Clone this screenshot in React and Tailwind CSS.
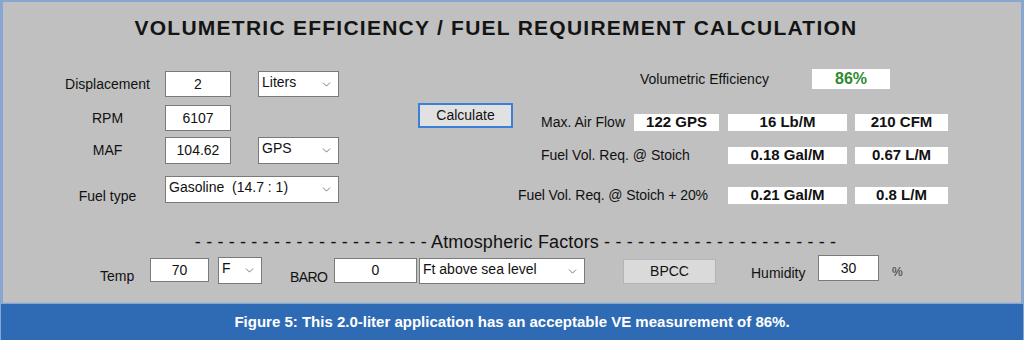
import React from 'react';
import { ChevronDown } from 'lucide-react';

const ui = { fontFamily: '"Liberation Sans", Arial, sans-serif' };

const TextBox = ({ value, className = '' }) => (
  <div className={`flex items-center justify-center bg-white border border-[#7a7a7a] text-[14px] text-[#111] ${className}`}>
    {value}
  </div>
);

const Combo = ({ value, className = '' }) => (
  <div className={`flex items-center justify-between bg-white border border-[#7a7a7a] pl-[3px] pr-[5px] text-[14px] text-[#111] ${className}`}>
    <span className="pb-[4px] whitespace-pre">{value}</span>
    <ChevronDown size={13} strokeWidth={1.4} className="text-[#555]" />
  </div>
);

const Result = ({ value, className = '' }) => (
  <div className={`flex items-center justify-center bg-white h-[17px] text-[15px] font-bold text-[#111] ${className}`}>
    {value}
  </div>
);

const Label = ({ children, className = '' }) => (
  <div className={`text-[14px] text-[#111] whitespace-nowrap ${className}`}>{children}</div>
);

const dashes = Array(21).fill('-').join(' ');

export default function App() {
  return (
    <div className="w-[1024px] h-[340px] bg-[#87a6d1] pt-[2px] flex flex-col" style={ui}>
      {/* form panel */}
      <div className="mx-[3px] h-[301px] bg-[#c0c0c0] border-b border-[#a9b8cc] flex flex-col">
        <h1 className="mt-[14px] h-[24px] leading-[24px] text-center pr-[32px] text-[21px] font-bold tracking-[1.25px] text-[#141414]">
          VOLUMETRIC EFFICIENCY / FUEL REQUIREMENT CALCULATION
        </h1>

        <div className="mt-[29px] h-[136px] flex items-start pl-[52px]">
          {/* inputs */}
          <div className="flex flex-col">
            <div className="mt-[2px] h-[26px] flex items-center">
              <Label className="w-[105px] text-center">Displacement</Label>
              <TextBox value="2" className="ml-[5px] w-[66px] h-full" />
              <Combo value="Liters" className="ml-[27px] w-[81px] h-full" />
            </div>
            <div className="mt-[8px] h-[26px] flex items-center">
              <Label className="w-[105px] text-center">RPM</Label>
              <TextBox value="6107" className="ml-[5px] w-[66px] h-full" />
            </div>
            <div className="mt-[6px] h-[27px] flex items-center">
              <Label className="w-[105px] text-center">MAF</Label>
              <TextBox value="104.62" className="ml-[5px] w-[66px] h-full" />
              <Combo value="GPS" className="ml-[27px] w-[81px] h-full" />
            </div>
            <div className="mt-[12px] h-[27px] flex items-center">
              <Label className="w-[105px] text-center pt-[13px]">Fuel type</Label>
              <Combo value="Gasoline  (14.7 : 1)" className="ml-[5px] w-[174px] h-full" />
            </div>
          </div>

          <button className="ml-[79px] mt-[34px] w-[95px] h-[25px] bg-[#e1e1e1] border-2 border-[#3b7fd8] text-[14px] text-[#111]">
            Calculate
          </button>

          {/* results */}
          <div className="ml-[5px] flex flex-col">
            <div className="h-[20px] flex items-center pl-[122px]">
              <Label className="w-[172px]">Volumetric Efficiency</Label>
              <div className="w-[78px] h-[20px] bg-white flex items-center justify-center text-[16px] font-bold text-[#2f8a30]">
                86%
              </div>
            </div>
            <div className="mt-[25px] h-[17px] flex items-center pl-[23px]">
              <Label className="w-[93px]">Max. Air Flow</Label>
              <Result value="122 GPS" className="w-[85px]" />
              <Result value="16 Lb/M" className="ml-[9px] w-[119px]" />
              <Result value="210 CFM" className="ml-[8px] w-[93px]" />
            </div>
            <div className="mt-[16px] h-[17px] flex items-center pl-[23px]">
              <Label className="w-[187px]">Fuel Vol. Req. @ Stoich</Label>
              <Result value="0.18 Gal/M" className="w-[119px]" />
              <Result value="0.67 L/M" className="ml-[8px] w-[93px]" />
            </div>
            <div className="mt-[23px] h-[17px] flex items-center">
              <Label className="w-[210px] tracking-[-0.1px]">Fuel Vol. Req. @ Stoich + 20%</Label>
              <Result value="0.21 Gal/M" className="w-[119px]" />
              <Result value="0.8 L/M" className="ml-[8px] w-[93px]" />
            </div>
          </div>
        </div>

        {/* atmospheric factors */}
        <div className="mt-[27px] h-[20px] leading-[20px] text-center pl-[7px] text-[18px] tracking-[0.15px] text-[#111] whitespace-pre">
          {dashes} Atmospheric Factors {dashes}
        </div>

        <div className="mt-[3px] flex items-start">
          <Label className="ml-[97px] mt-[11px] w-[35px]">Temp</Label>
          <TextBox value="70" className="ml-[15px] mt-[3px] w-[59px] h-[24px]" />
          <Combo value="F" className="ml-[9px] mt-[2px] w-[44px] h-[27px]" />
          <Label className="ml-[28px] mt-[12px] w-[35px] tracking-[-0.6px]">BARO</Label>
          <TextBox value="0" className="ml-[9px] mt-[3px] w-[83px] h-[25px]" />
          <Combo value="Ft above sea level" className="ml-[2px] mt-[3px] w-[166px] h-[26px]" />
          <div className="ml-[38px] mt-[4px] w-[93px] h-[25px] bg-[#dadada] border border-[#b4b4b4] flex items-center justify-center text-[14px] text-[#111]">
            BPCC
          </div>
          <Label className="ml-[35px] mt-[8px] w-[53px]">Humidity</Label>
          <TextBox value="30" className="ml-[14px] w-[61px] h-[26px]" />
          <div className="ml-[13px] mt-[8px] text-[12px] text-[#333]">%</div>
        </div>
      </div>

      {/* caption */}
      <div
        className="mx-[1px] mt-[1px] h-[36px] bg-[#2e6bb4] flex items-center justify-center text-white font-bold text-[15px]"
        style={{ fontFamily: '"Liberation Sans Narrow", "Arial Narrow", "Liberation Sans", sans-serif' }}
      >
        Figure 5: This 2.0-liter application has an acceptable VE measurement of 86%.
      </div>
    </div>
  );
}
